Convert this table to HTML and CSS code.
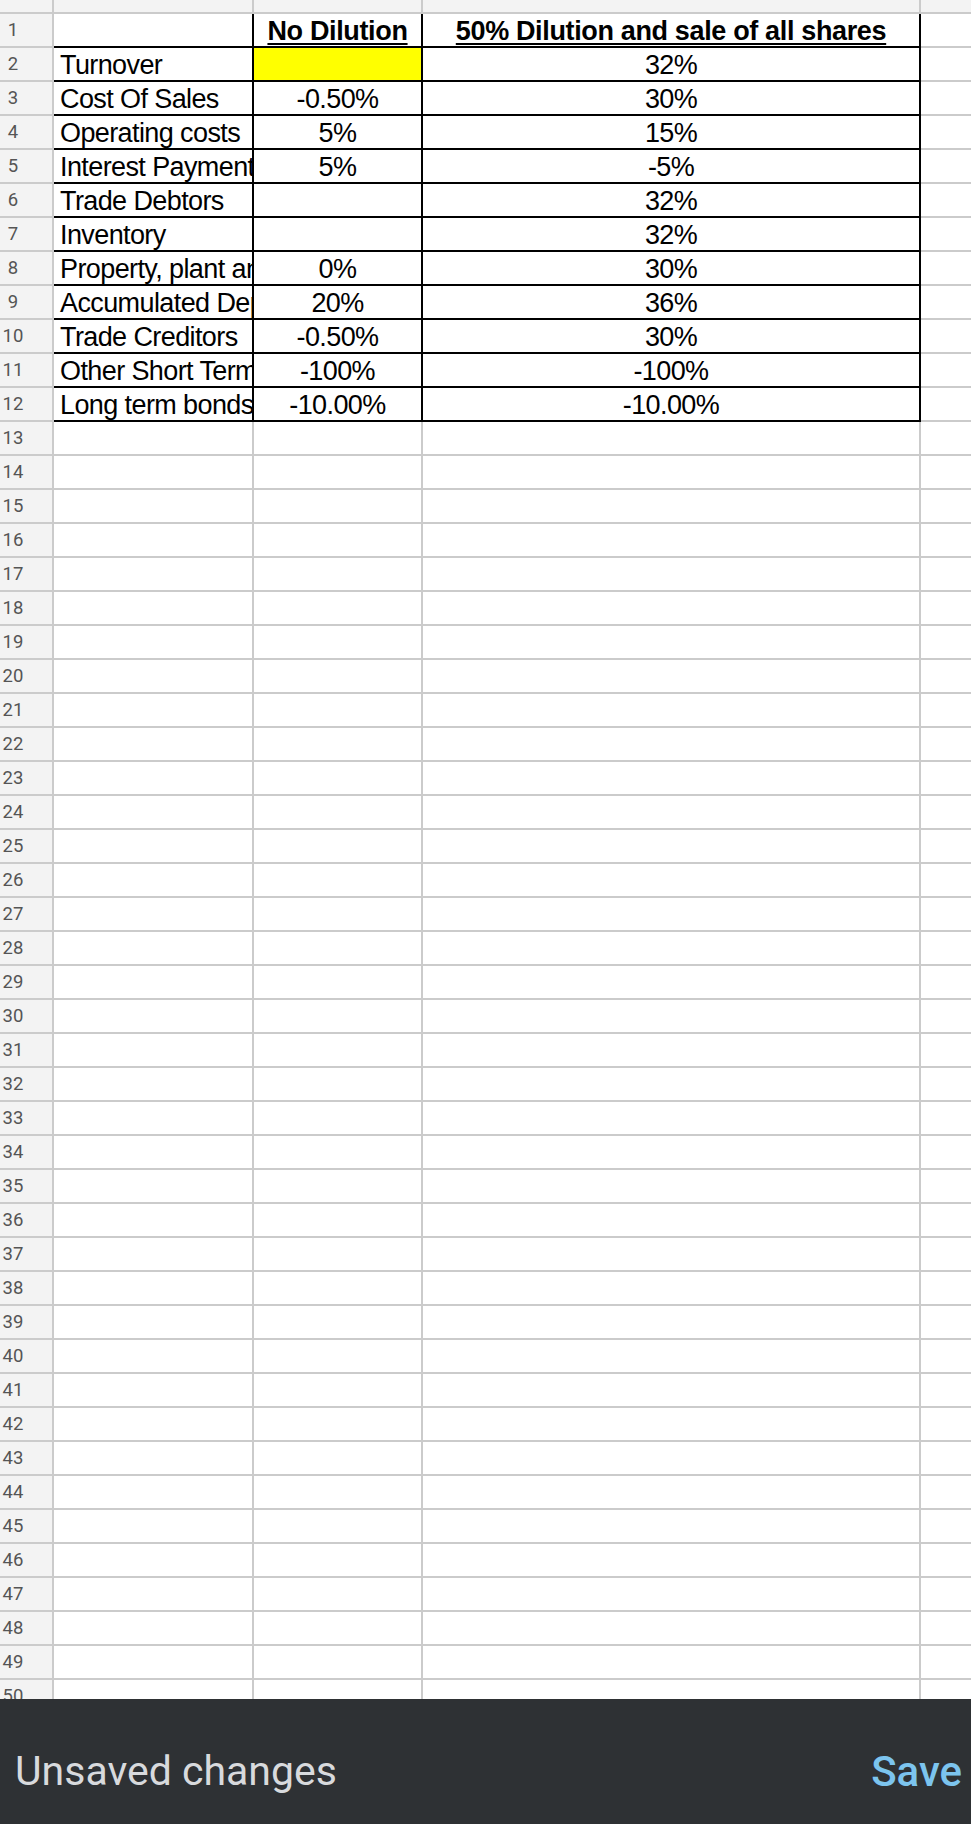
FILE: index.html
```html
<!DOCTYPE html>
<html lang="en">
<head>
<meta charset="utf-8">
<title>Sheet</title>
<link rel="stylesheet" href="styles.css">
</head>
<body>
<div class="app">
  <div class="sheet">
    <div class="grid">
      <div class="c ch"></div><div class="c ch"></div><div class="c ch"></div><div class="c ch"></div><div class="c ch"></div>

      <div class="c rh">1</div><div class="c t"></div><div class="c t mid"><span class="hd">No Dilution</span></div><div class="c t mid"><span class="hd">50% Dilution and sale of all shares</span></div><div class="c"></div>
      <div class="c rh">2</div><div class="c t">Turnover</div><div class="c t yellow"></div><div class="c t mid">32%</div><div class="c"></div>
      <div class="c rh">3</div><div class="c t">Cost Of Sales</div><div class="c t mid">-0.50%</div><div class="c t mid">30%</div><div class="c"></div>
      <div class="c rh">4</div><div class="c t">Operating costs</div><div class="c t mid">5%</div><div class="c t mid">15%</div><div class="c"></div>
      <div class="c rh">5</div><div class="c t">Interest Payments</div><div class="c t mid">5%</div><div class="c t mid">-5%</div><div class="c"></div>
      <div class="c rh">6</div><div class="c t">Trade Debtors</div><div class="c t mid"></div><div class="c t mid">32%</div><div class="c"></div>
      <div class="c rh">7</div><div class="c t">Inventory</div><div class="c t mid"></div><div class="c t mid">32%</div><div class="c"></div>
      <div class="c rh">8</div><div class="c t">Property, plant and equipment</div><div class="c t mid">0%</div><div class="c t mid">30%</div><div class="c"></div>
      <div class="c rh">9</div><div class="c t">Accumulated Depreciation</div><div class="c t mid">20%</div><div class="c t mid">36%</div><div class="c"></div>
      <div class="c rh">10</div><div class="c t">Trade Creditors</div><div class="c t mid">-0.50%</div><div class="c t mid">30%</div><div class="c"></div>
      <div class="c rh">11</div><div class="c t">Other Short Term Liabilities</div><div class="c t mid">-100%</div><div class="c t mid">-100%</div><div class="c"></div>
      <div class="c rh">12</div><div class="c t">Long term bonds</div><div class="c t mid">-10.00%</div><div class="c t mid">-10.00%</div><div class="c"></div>

      <div class="c rh">13</div><div class="c"></div><div class="c"></div><div class="c"></div><div class="c"></div>
      <div class="c rh">14</div><div class="c"></div><div class="c"></div><div class="c"></div><div class="c"></div>
      <div class="c rh">15</div><div class="c"></div><div class="c"></div><div class="c"></div><div class="c"></div>
      <div class="c rh">16</div><div class="c"></div><div class="c"></div><div class="c"></div><div class="c"></div>
      <div class="c rh">17</div><div class="c"></div><div class="c"></div><div class="c"></div><div class="c"></div>
      <div class="c rh">18</div><div class="c"></div><div class="c"></div><div class="c"></div><div class="c"></div>
      <div class="c rh">19</div><div class="c"></div><div class="c"></div><div class="c"></div><div class="c"></div>
      <div class="c rh">20</div><div class="c"></div><div class="c"></div><div class="c"></div><div class="c"></div>
      <div class="c rh">21</div><div class="c"></div><div class="c"></div><div class="c"></div><div class="c"></div>
      <div class="c rh">22</div><div class="c"></div><div class="c"></div><div class="c"></div><div class="c"></div>
      <div class="c rh">23</div><div class="c"></div><div class="c"></div><div class="c"></div><div class="c"></div>
      <div class="c rh">24</div><div class="c"></div><div class="c"></div><div class="c"></div><div class="c"></div>
      <div class="c rh">25</div><div class="c"></div><div class="c"></div><div class="c"></div><div class="c"></div>
      <div class="c rh">26</div><div class="c"></div><div class="c"></div><div class="c"></div><div class="c"></div>
      <div class="c rh">27</div><div class="c"></div><div class="c"></div><div class="c"></div><div class="c"></div>
      <div class="c rh">28</div><div class="c"></div><div class="c"></div><div class="c"></div><div class="c"></div>
      <div class="c rh">29</div><div class="c"></div><div class="c"></div><div class="c"></div><div class="c"></div>
      <div class="c rh">30</div><div class="c"></div><div class="c"></div><div class="c"></div><div class="c"></div>
      <div class="c rh">31</div><div class="c"></div><div class="c"></div><div class="c"></div><div class="c"></div>
      <div class="c rh">32</div><div class="c"></div><div class="c"></div><div class="c"></div><div class="c"></div>
      <div class="c rh">33</div><div class="c"></div><div class="c"></div><div class="c"></div><div class="c"></div>
      <div class="c rh">34</div><div class="c"></div><div class="c"></div><div class="c"></div><div class="c"></div>
      <div class="c rh">35</div><div class="c"></div><div class="c"></div><div class="c"></div><div class="c"></div>
      <div class="c rh">36</div><div class="c"></div><div class="c"></div><div class="c"></div><div class="c"></div>
      <div class="c rh">37</div><div class="c"></div><div class="c"></div><div class="c"></div><div class="c"></div>
      <div class="c rh">38</div><div class="c"></div><div class="c"></div><div class="c"></div><div class="c"></div>
      <div class="c rh">39</div><div class="c"></div><div class="c"></div><div class="c"></div><div class="c"></div>
      <div class="c rh">40</div><div class="c"></div><div class="c"></div><div class="c"></div><div class="c"></div>
      <div class="c rh">41</div><div class="c"></div><div class="c"></div><div class="c"></div><div class="c"></div>
      <div class="c rh">42</div><div class="c"></div><div class="c"></div><div class="c"></div><div class="c"></div>
      <div class="c rh">43</div><div class="c"></div><div class="c"></div><div class="c"></div><div class="c"></div>
      <div class="c rh">44</div><div class="c"></div><div class="c"></div><div class="c"></div><div class="c"></div>
      <div class="c rh">45</div><div class="c"></div><div class="c"></div><div class="c"></div><div class="c"></div>
      <div class="c rh">46</div><div class="c"></div><div class="c"></div><div class="c"></div><div class="c"></div>
      <div class="c rh">47</div><div class="c"></div><div class="c"></div><div class="c"></div><div class="c"></div>
      <div class="c rh">48</div><div class="c"></div><div class="c"></div><div class="c"></div><div class="c"></div>
      <div class="c rh">49</div><div class="c"></div><div class="c"></div><div class="c"></div><div class="c"></div>
      <div class="c rh">50</div><div class="c"></div><div class="c"></div><div class="c"></div><div class="c"></div>
    </div>
  </div>
  <div class="bar">
    <span class="bar-msg">Unsaved changes</span>
    <span class="bar-action">Save</span>
  </div>
</div>
</body>
</html>
```

FILE: styles.css
```css
html, body {
  margin: 0;
  padding: 0;
  background: #ffffff;
}

.app {
  width: 971px;
  height: 1824px;
  display: flex;
  flex-direction: column;
  overflow: hidden;
}

.sheet {
  flex: 1;
  overflow: hidden;
}

.grid {
  display: grid;
  grid-template-columns: 54px 200px 169px 498px 60px;
  grid-template-rows: 14px;
  grid-auto-rows: 34px;
  font-family: "Liberation Sans", Arial, sans-serif;
  font-size: 27px;
  letter-spacing: -0.6px;
  line-height: 30px;
  color: #000000;
}

.c {
  box-sizing: border-box;
  border-right: 2px solid #cbcbcb;
  border-bottom: 2px solid #cbcbcb;
  display: flex;
  align-items: flex-end;
  padding: 0 6px;
  white-space: nowrap;
  overflow: hidden;
  min-width: 0;
}

.ch {
  background: #f3f3f3;
}

.rh {
  background: #f3f3f3;
  font-family: Roboto, "Noto Sans", sans-serif;
  font-size: 18.5px;
  letter-spacing: 0;
  line-height: 22px;
  color: #555555;
  align-items: center;
  justify-content: center;
  padding: 0 26px 0 0;
}

.t {
  border-right-color: #000000;
  border-bottom-color: #000000;
}

.mid {
  justify-content: center;
}

.yellow {
  background: #ffff00;
}

.hd {
  font-weight: bold;
  letter-spacing: -0.35px;
  text-decoration: underline;
  text-decoration-thickness: 2px;
  text-underline-offset: 3px;
}

.bar {
  height: 125px;
  flex: none;
  background: #2e3134;
  display: flex;
  justify-content: space-between;
  align-items: flex-start;
  padding: 48px 9px 0 15px;
  box-sizing: border-box;
  font-family: Roboto, "Noto Sans", sans-serif;
  font-size: 41px;
  line-height: 49px;
}

.bar-msg {
  color: #d8dadd;
}

.bar-action {
  color: #7cc4ee;
  font-weight: 500;
  font-size: 42px;
}
```
